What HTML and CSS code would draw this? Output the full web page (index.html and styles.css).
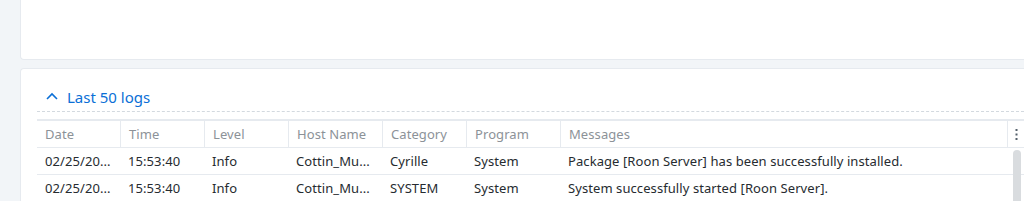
FILE: index.html
```html
<!DOCTYPE html>
<html lang="en">
<head>
    <meta charset="UTF-8">
    <title>Logs</title>
    <link rel="stylesheet" href="styles.css">
</head>
<body>
    <div class="page">
        <div class="card card-top"></div>

        <div class="card card-logs">
            <div class="section-head">
                <svg class="chevron" width="12" height="8" viewBox="0 0 12 8">
                    <path d="M1 7 L6 2 L11 7" fill="none" stroke="#0b6fd6" stroke-width="1.6"/>
                </svg>
                <span class="title">Last 50 logs</span>
            </div>

            <div class="grid">
                <div class="row head">
                    <div class="cell">Date</div>
                    <div class="cell">Time</div>
                    <div class="cell">Level</div>
                    <div class="cell">Host Name</div>
                    <div class="cell">Category</div>
                    <div class="cell">Program</div>
                    <div class="cell">Messages</div>
                    <div class="cell menu">
                        <svg width="3" height="11" viewBox="0 0 3 11">
                            <rect x="0.5" y="0" width="2" height="2" fill="#55606b"/>
                            <rect x="0.5" y="4.5" width="2" height="2" fill="#55606b"/>
                            <rect x="0.5" y="9" width="2" height="2" fill="#55606b"/>
                        </svg>
                    </div>
                </div>
                <div class="row">
                    <div class="cell">02/25/20...</div>
                    <div class="cell">15:53:40</div>
                    <div class="cell">Info</div>
                    <div class="cell">Cottin_Mu...</div>
                    <div class="cell">Cyrille</div>
                    <div class="cell">System</div>
                    <div class="cell">Package [Roon Server] has been successfully installed.</div>
                    <div class="cell"></div>
                </div>
                <div class="row">
                    <div class="cell">02/25/20...</div>
                    <div class="cell">15:53:40</div>
                    <div class="cell">Info</div>
                    <div class="cell">Cottin_Mu...</div>
                    <div class="cell">SYSTEM</div>
                    <div class="cell">System</div>
                    <div class="cell">System successfully started [Roon Server].</div>
                    <div class="cell"></div>
                </div>
                <div class="scrollbar"></div>
            </div>
        </div>
    </div>
</body>
</html>
```

FILE: styles.css
```css
body {
    margin: 0;
    background-color: #f2f5f8;
    font-family: "Noto Sans", "DejaVu Sans", sans-serif;
    color: #262b30;
    overflow: hidden;
}

.page {
    padding-left: 20px;
}

.card {
    background: #fff;
    border: 1px solid #e6eaef;
    border-right: none;
}

.card-top {
    height: 59px;
    border-top: none;
    border-radius: 0 0 0 4px;
}

.card-logs {
    margin-top: 8px;
    height: 140px;
    border-bottom: none;
    border-radius: 4px 0 0 0;
    padding-left: 16px;
}

.section-head {
    display: flex;
    align-items: center;
    height: 41px;
    margin-top: 1px;
    border-bottom: 1px dashed #d3d9df;
}

.chevron {
    margin-left: 9px;
    margin-right: 9px;
    margin-top: 11px;
}

.title {
    font-size: 15px;
    color: #0b6fd6;
    margin-top: 13px;
}

.grid {
    position: relative;
    margin-top: 7px;
    border-top: 2px solid #e6eaef;
}

.row {
    display: grid;
    grid-template-columns: 83px 84px 84px 94px 84px 94px 447px 1fr;
    height: 26px;
    border-bottom: 1px solid #e6eaef;
    font-size: 13px;
    letter-spacing: 0.08px;
    line-height: 26px;
}

.cell {
    padding-left: 8px;
    white-space: nowrap;
    overflow: hidden;
}

.row.head {
    color: #8c9298;
}

.row.head .cell + .cell {
    border-left: 1px solid #e6eaef;
}

.menu {
    display: flex;
    align-items: center;
    padding-left: 7px;
}

.scrollbar {
    position: absolute;
    left: 976px;
    top: 29px;
    width: 8px;
    height: 80px;
    border-radius: 4px;
    background: #d9dcdf;
}
```
